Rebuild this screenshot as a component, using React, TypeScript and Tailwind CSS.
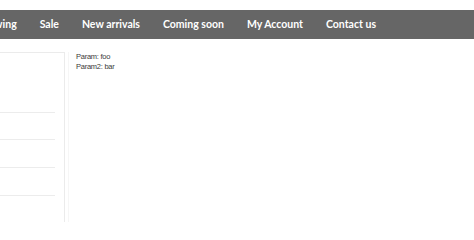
const menu = ["Now showing", "Sale", "New arrivals", "Coming soon", "My Account", "Contact us"];

export default function App() {
  return (
    <div className="min-h-[219px] bg-white pt-[10px] overflow-hidden">
      <nav className="h-[29px] bg-[#666666] flex items-center overflow-hidden whitespace-nowrap">
        <ul className="flex gap-[23px] -ml-[47px] font-['Lato',sans-serif] text-[10.5px] font-bold text-white">
          {menu.map((item) => (
            <li key={item}>{item}</li>
          ))}
        </ul>
      </nav>

      <div className="flex mt-[13px]">
        <aside className="w-[65px] h-[170px] shrink-0 border-t border-r border-[#ebebeb]">
          <div className="h-[60px] mr-[9px] border-b border-[#ececec]" />
          <div className="h-[27px] mr-[9px] border-b border-[#ececec]" />
          <div className="h-[28px] mr-[9px] border-b border-[#ececec]" />
          <div className="h-[28px] mr-[9px] border-b border-[#ececec]" />
        </aside>
        <div className="flex-1 ml-[3px] pl-[7px] border-l border-[#f6f6f6] font-['Liberation_Sans',Arial,sans-serif] text-[7.5px] leading-[9.5px] tracking-[-0.25px] text-[#3a3a3a]">
          <p>Param: foo</p>
          <p>Param2: bar</p>
        </div>
      </div>
    </div>
  );
}
